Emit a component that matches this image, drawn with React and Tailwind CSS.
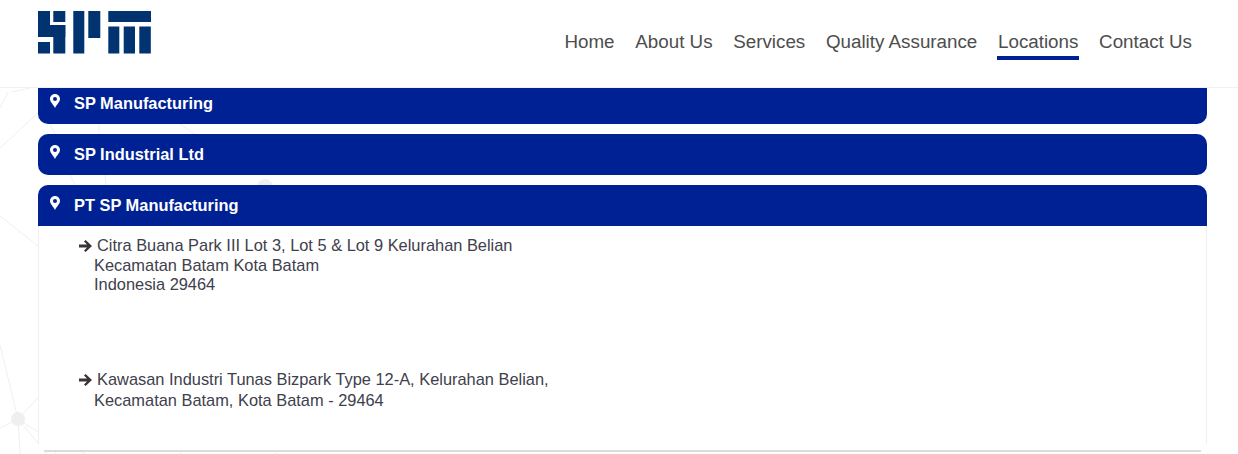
import React from 'react';

const navItems = ['Home', 'About Us', 'Services', 'Quality Assurance', 'Locations', 'Contact Us'];

const Logo = () => (
  <svg width="114" height="44" viewBox="0 0 114 44" className="block" fill="#00336f">
    <rect x="0" y="0" width="12" height="26"/>
    <rect x="15.3" y="0" width="12" height="11"/>
    <rect x="0" y="14" width="27.3" height="12"/>
    <rect x="15.3" y="14" width="12" height="28.5"/>
    <rect x="0" y="31" width="12" height="11.5"/>
    <rect x="35.3" y="0" width="11" height="42.5"/>
    <rect x="50.3" y="0" width="12" height="27"/>
    <rect x="70.3" y="0" width="42.7" height="11"/>
    <rect x="70.3" y="15.5" width="11" height="27"/>
    <rect x="85.7" y="15.5" width="11.3" height="27"/>
    <rect x="101.3" y="15.5" width="11.5" height="27"/>
  </svg>
);

const Pin = () => (
  <svg width="10" height="14" viewBox="0 0 10 14" className="block" fill="#fff">
    <path fillRule="evenodd" d="M5 0C2.2 0 0 2.2 0 5 0 8 3.4 10.5 5 14 6.6 10.5 10 8 10 5 10 2.2 7.8 0 5 0ZM5 3a2 2 0 1 1 0 4 2 2 0 0 1 0-4Z"/>
  </svg>
);

const Arrow = () => (
  <svg width="13" height="12" viewBox="0 0 13 12" className="mr-[6px] ml-[1px] shrink-0" fill="#3a3338">
    <path d="M6.6 0 13 6 6.6 12 5 10.4 8 7.4H0V4.6H8L5 1.6Z"/>
  </svg>
);

const Bar = ({title, className}) => (
  <div className={'flex items-center bg-[#002193] pl-[12px] text-[16.4px] font-bold text-white ' + className}>
    <span className="mb-[5px] w-[24px]"><Pin/></span>
    <span>{title}</span>
  </div>
);

const Address = ({lines, gap}) => (
  <div className="text-[16.4px] leading-[19.6px] text-[#40404c]">
    <div className={'flex items-center ' + gap}>
      <Arrow/>
      <span className="-ml-[1px]">{lines[0]}</span>
    </div>
    {lines.slice(1).map((line, key) => (
      <div key={key} className="pl-[16px]">{line}</div>
    ))}
  </div>
);

const Network = () => (
  <svg className="absolute inset-0 h-full w-full" viewBox="0 0 1238 366" fill="none" stroke="#efefef" strokeWidth="1">
    <path d="M0 60 L38 25 M8 4 L0 20 M12 4 L30 0 M0 128 L38 158 M0 257 L17 327 M18 331 L38 310 M18 331 L0 340 M18 331 L20 366 M18 331 L38 355 M18 331 L38 344"/>
    <path d="M50 36 L55 46 M99 36 L99 46 M180 36 L195 46 M70 87 L75 97 M105 87 L106 97 M45 363 L46 366 M55 363 L56 366 M80 363 L85 366 M180 363 L181 366 M277 363 L276 366"/>
    <circle cx="265" cy="99" r="8" fill="#efefef" stroke="none"/>
    <circle cx="18" cy="331" r="7" fill="#efefef" stroke="none"/>
  </svg>
);

const App = () => {
  return (
    <div className="h-[454px] w-[1238px] overflow-hidden bg-white font-['Liberation_Sans',sans-serif]">
      <header className="relative z-10 flex h-[88px] items-start justify-between border-b border-[#f0f0f0] bg-white pl-[38px] pr-[46px] pt-[11px]">
        <Logo/>
        <nav className="mt-[19px] flex gap-[20.7px] text-[18.8px] text-[#4d4d4d]">
          {navItems.map((item) => (
            <a key={item} className={'block h-[30px] leading-[24px] ' + (item === 'Locations' ? '-mx-[1px] border-b-4 border-[#002193] px-[1px]' : '')}>{item}</a>
          ))}
        </nav>
      </header>
      <main className="relative h-[366px] pl-[38px]">
        <Network/>
        <div className="relative flex w-[1169px] flex-col gap-[10px]">
          <Bar title="SP Manufacturing" className="h-[36px] rounded-b-[10px] pb-[5px]"/>
          <Bar title="SP Industrial Ltd" className="h-[41px] rounded-[10px]"/>
          <div>
            <Bar title="PT SP Manufacturing" className="h-[41px] rounded-t-[10px]"/>
            <div className="h-[218px] border-x border-x-[#efefef] bg-white pl-[39px] pt-[10px]">
              <Address lines={['Citra Buana Park III Lot 3, Lot 5 & Lot 9 Kelurahan Belian', 'Kecamatan Batam Kota Batam', 'Indonesia 29464']}/>
              <div className="h-[75px]"></div>
              <Address gap="mb-[2px]" lines={['Kawasan Industri Tunas Bizpark Type 12-A, Kelurahan Belian,', 'Kecamatan Batam, Kota Batam - 29464']}/>
            </div>
            <div className="bg-white px-[6px] pt-[6px]">
              <div className="h-[2px] bg-[#dcdcdc]"></div>
            </div>
          </div>
        </div>
      </main>
    </div>
  );
};

export default App;
